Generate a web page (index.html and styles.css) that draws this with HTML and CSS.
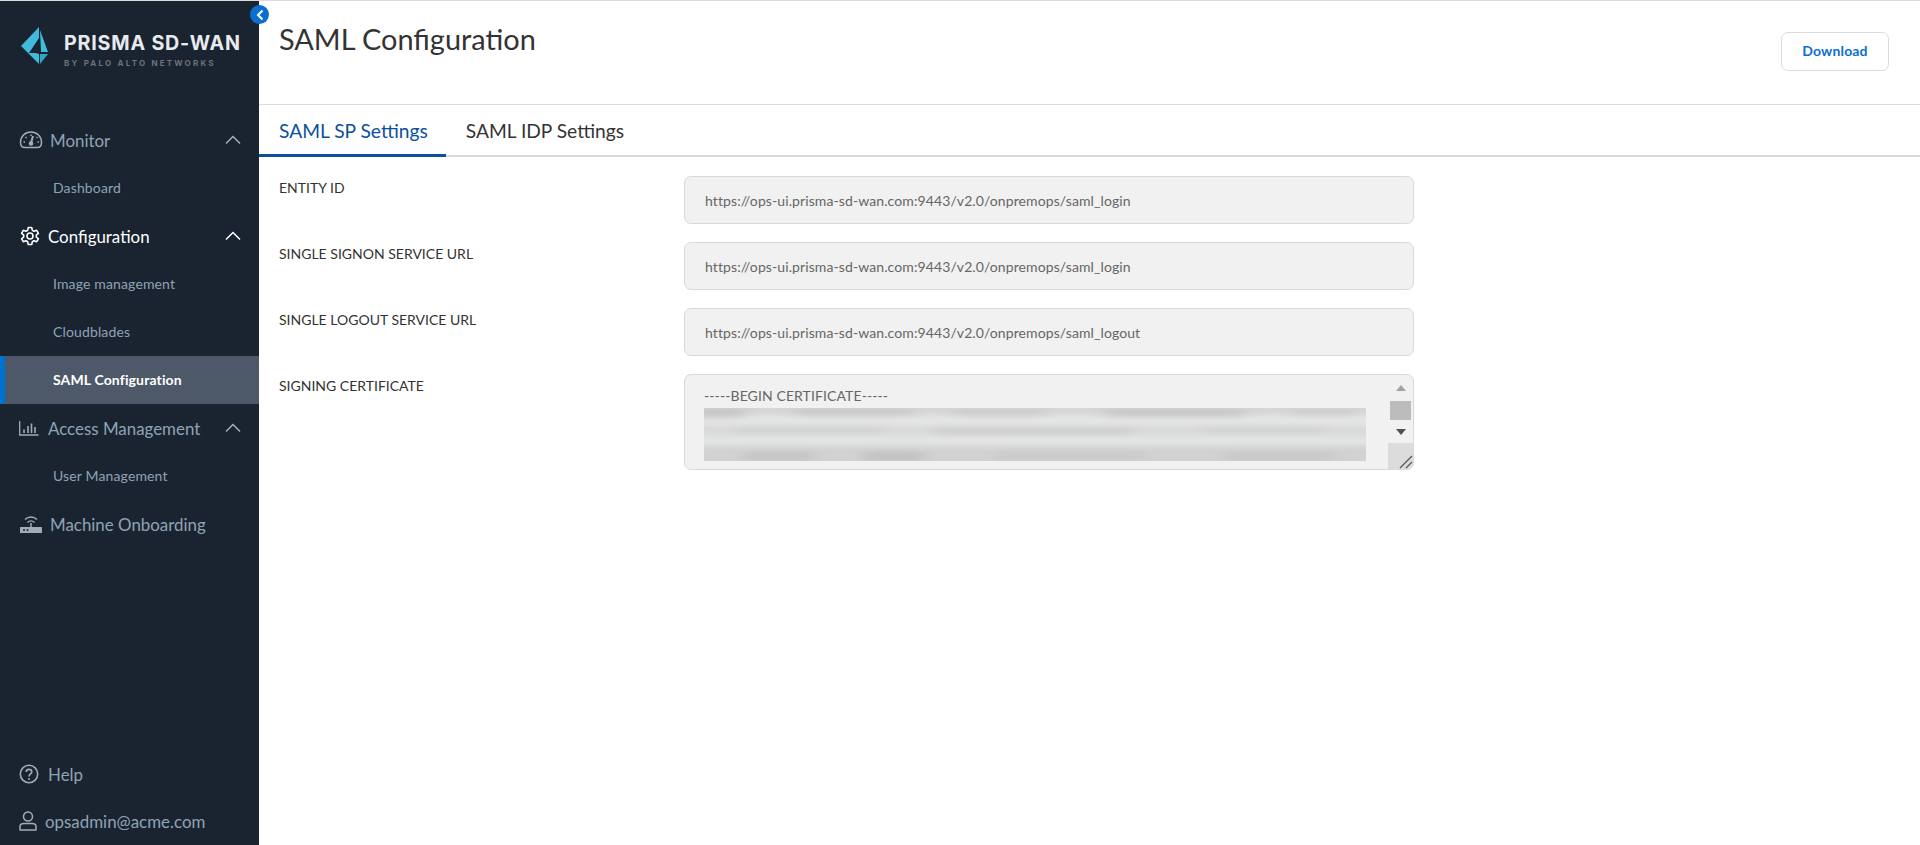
FILE: index.html
```html
<!DOCTYPE html>
<html lang="en">
<head>
<meta charset="utf-8">
<title>SAML Configuration</title>
<link rel="stylesheet" href="styles.css">
</head>
<body>
<div class="app">
  <aside class="sidebar">
    <button class="collapse" aria-label="Collapse">
      <svg viewBox="0 0 12 12" width="12" height="12"><path d="M8.500 1.500 4 6 8.500 10.500" fill="none" stroke="#fff" stroke-width="2"/></svg>
    </button>
    <div class="brand">
      <svg class="brand-mark" viewBox="0 0 27 38" width="27" height="38">
        <path d="M18 0V11L8 26H14.500L18 27V37L0 19Z" fill="#3fbcdc"/>
        <path d="M19 3 27 25H20Z" fill="#3fbcdc"/>
        <path d="M19 27H27L19 37Z" fill="#2fa6c6"/>
        <path d="M17 15V24H11Z" fill="#1a2330"/>
      </svg>
      <div class="brand-text">
        <div class="brand-name">PRISMA SD-WAN</div>
        <div class="brand-sub">BY PALO ALTO NETWORKS</div>
      </div>
    </div>
    <nav class="nav">
      <div class="nav-head">
        <svg class="ico" viewBox="0 0 24 20" width="24" height="20" fill="none" stroke="currentColor" stroke-width="1.500"><path d="M6 17.500H18.500C21 17.500 22.500 15.500 22.500 12.500 22.500 6.500 18 2 12 2S1.500 6.500 1.500 12.500C1.500 15.500 3 17.500 6 17.500Z"/><path d="M12 13 14 6" stroke-width="2"/><path d="M12 4.500V6M6.500 7 7.500 8M4.500 12H6M17.500 8 18.500 7M18.500 12H20"/><circle cx="12" cy="13.500" r="1.500" fill="currentColor"/></svg>
        <span class="head-label">Monitor</span>
        <svg class="chev" viewBox="0 0 16 10" width="16" height="10"><path d="M1 8.500 8 1.500 15 8.500" fill="none" stroke="currentColor" stroke-width="1.500"/></svg>
      </div>
      <a class="nav-item">Dashboard</a>
      <div class="nav-head active-head">
        <svg class="ico gear" viewBox="0 0 20 20" width="20" height="20" fill="none" stroke="currentColor" stroke-width="1.600"><path d="M8.300 1.500H11.700L12.300 4.200 14 5.200 16.700 4.300 18.400 7.300 16.300 9.100V11L18.400 12.800 16.700 15.700 14 14.800 12.300 15.800 11.700 18.500H8.300L7.700 15.800 6 14.800 3.300 15.700 1.600 12.800 3.700 11V9.100L1.600 7.300 3.300 4.300 6 5.200 7.700 4.200Z" stroke-linejoin="round"/><circle cx="10" cy="10" r="3"/></svg>
        <span class="head-label">Configuration</span>
        <svg class="chev" viewBox="0 0 16 10" width="16" height="10"><path d="M1 8.500 8 1.500 15 8.500" fill="none" stroke="currentColor" stroke-width="1.500"/></svg>
      </div>
      <a class="nav-item">Image management</a>
      <a class="nav-item">Cloudblades</a>
      <a class="nav-item current">SAML Configuration</a>
      <div class="nav-head">
        <svg class="ico bars" viewBox="0 0 20 16" width="20" height="16" fill="none" stroke="currentColor" stroke-width="1.300"><path d="M.700 1V15H19.500"/><path d="M5 9.500V13M9 6V13M12.500 3.500V13M16 7V13" stroke-width="1.600"/></svg>
        <span class="head-label">Access Management</span>
        <svg class="chev" viewBox="0 0 16 10" width="16" height="10"><path d="M1 8.500 8 1.500 15 8.500" fill="none" stroke="currentColor" stroke-width="1.500"/></svg>
      </div>
      <a class="nav-item">User Management</a>
      <div class="nav-head">
        <svg class="ico" viewBox="0 0 24 20" width="24" height="20" fill="none" stroke="currentColor" stroke-width="1.500"><path d="M6 5.500C9.500 2 14.500 2 18 5.500M8.500 8.500C10.500 6.500 13.500 6.500 15.500 8.500"/><path d="M12 9V13"/><path d="M1.500 13H22.500Q23 13 23 14V19H1V14Q1 13 1.500 13Z" fill="currentColor" stroke="none"/><circle cx="5" cy="16" r="1" fill="#1a2330" stroke="none"/><circle cx="8.500" cy="16" r="1" fill="#1a2330" stroke="none"/></svg>
        <span class="head-label">Machine Onboarding</span>
      </div>
    </nav>
    <div class="side-foot">
      <div class="foot-row help">
        <svg viewBox="0 0 20 20" width="20" height="20" fill="none" stroke="currentColor" stroke-width="1.600"><circle cx="10" cy="10" r="8.700"/><path d="M7.200 8C7.200 4.500 12.800 4.500 12.800 8 12.800 10 10 10 10 12.500"/><circle cx="10" cy="15" r="1" fill="currentColor" stroke="none"/></svg>
        <span>Help</span>
      </div>
      <div class="foot-row user">
        <svg viewBox="0 0 18 20" width="18" height="20" fill="none" stroke="currentColor" stroke-width="1.500"><circle cx="9" cy="5.500" r="4.500"/><path d="M1 19V15.500C1 13.500 3 12.500 5 12.500H13C15 12.500 17 13.500 17 15.500V19Z" stroke-linejoin="round"/></svg>
        <span>opsadmin@acme.com</span>
      </div>
    </div>
  </aside>
  <main class="main">
    <header class="page-head">
      <h1 class="title">SAML Configuration</h1>
      <button class="download">Download</button>
    </header>
    <div class="tabs">
      <div class="tab selected">SAML SP Settings</div>
      <div class="tab">SAML IDP Settings</div>
    </div>
    <section class="form">
      <div class="row">
        <div class="label">ENTITY ID</div>
        <div class="field">https://ops-ui.prisma-sd-wan.com:9443/v2.0/onpremops/saml_login</div>
      </div>
      <div class="row">
        <div class="label">SINGLE SIGNON SERVICE URL</div>
        <div class="field">https://ops-ui.prisma-sd-wan.com:9443/v2.0/onpremops/saml_login</div>
      </div>
      <div class="row">
        <div class="label">SINGLE LOGOUT SERVICE URL</div>
        <div class="field">https://ops-ui.prisma-sd-wan.com:9443/v2.0/onpremops/saml_logout</div>
      </div>
      <div class="row">
        <div class="label">SIGNING CERTIFICATE</div>
        <div class="field cert">
          <div class="cert-body">
            <div class="cert-line">-----BEGIN CERTIFICATE-----</div>
            <svg class="redact" viewBox="0 0 662 53" width="662" height="53" preserveAspectRatio="none">
              <defs><filter id="smear" x="-5%" y="-20%" width="110%" height="140%"><feGaussianBlur stdDeviation="8 3"/></filter></defs>
              <rect width="662" height="53" fill="#dfe0e0"/>
              <g filter="url(#smear)">
                <rect x="-10" y="-4" width="690" height="10" fill="#d4d4d4"/>
                <rect x="-10" y="10" width="690" height="5" fill="#e8e9e9"/>
                <rect x="-10" y="18" width="690" height="9" fill="#d9d9d9"/>
                <rect x="-10" y="30" width="690" height="5" fill="#e6e7e7"/>
                <rect x="-10" y="38" width="690" height="20" fill="#d2d2d2"/>
                <rect x="-10" y="0" width="50" height="10" fill="#c6c6c6"/>
                <rect x="90" y="1" width="120" height="7" fill="#c7c7c7"/>
                <rect x="250" y="2" width="90" height="6" fill="#c8c8c8"/>
                <rect x="400" y="1" width="140" height="8" fill="#c6c6c6"/>
                <rect x="590" y="2" width="60" height="6" fill="#cbcbcb"/>
                <rect x="30" y="20" width="150" height="5" fill="#cdcdcd"/>
                <rect x="230" y="20" width="200" height="6" fill="#cacaca"/>
                <rect x="500" y="20" width="120" height="5" fill="#cecece"/>
                <rect x="40" y="44" width="70" height="9" fill="#c4c4c4"/>
                <rect x="160" y="44" width="60" height="9" fill="#c0c0c0"/>
                <rect x="290" y="44" width="150" height="9" fill="#cacaca"/>
                <rect x="520" y="44" width="110" height="9" fill="#c8c8c8"/>
              </g>
            </svg>
          </div>
          <div class="scrollbar">
            <span class="arrow up"></span>
            <span class="thumb"></span>
            <span class="arrow down"></span>
            <span class="resizer">
              <svg viewBox="0 0 14 14" width="14" height="14" fill="none" stroke="#555" stroke-width="1.200"><path d="M1 13 13 1M7 13 13 7"/></svg>
            </span>
          </div>
        </div>
      </div>
    </section>
  </main>
</div>
</body>
</html>
```

FILE: styles.css
```css
* { box-sizing: border-box; }
html, body { margin: 0; height: 100%; }
body {
  font-family: Lato, "Open Sans", sans-serif;
  background: #fff;
  overflow: hidden;
}
.app {
  display: flex;
  height: 845px;
  border-top: 1px solid #dcdcdc;
}
.sidebar {
  position: relative;
  flex: 0 0 259px;
  display: flex;
  flex-direction: column;
  background: #1a2330;
  color: #8fa3b5;
}
.collapse {
  position: absolute;
  top: 4px;
  left: 250px;
  width: 19px;
  height: 19px;
  padding: 0;
  border: 0;
  border-radius: 50%;
  background: #0a6fd0;
  display: flex;
  align-items: center;
  justify-content: center;
}
.brand {
  display: flex;
  align-items: flex-start;
  height: 92px;
  padding: 26px 0 0 21px;
}
.brand-mark { flex: none; margin-right: 16px; }
.brand-text { display: flex; flex-direction: column; padding-top: 4px; }
.brand-name {
  font-family: Inter, sans-serif;
  font-weight: 700;
  font-size: 19.700px;
  line-height: 24px;
  letter-spacing: .8px;
  color: #e8ebee;
  white-space: nowrap;
}
.brand-sub {
  font-family: Inter, sans-serif;
  font-weight: 700;
  font-size: 8px;
  line-height: 16px;
  letter-spacing: 2.200px;
  color: #6d7278;
  white-space: nowrap;
}
.nav { display: flex; flex-direction: column; padding-top: 23px; }
.nav-head {
  display: flex;
  align-items: center;
  height: 48px;
  padding: 0 18px 0 19px;
  font-size: 16.900px;
  color: #8fa3b5;
}
.ico { flex: none; margin-right: 7px; color: #a2acb6; }
.gear { margin-right: 8px; margin-left: 1px; color: #fff; }
.bars { margin-right: 9px; }
.head-label { flex: 1; white-space: nowrap; }
.chev { flex: none; color: #a7afb7; }
.active-head { color: #fff; }
.active-head .chev { color: #fff; }
.nav-item {
  display: flex;
  align-items: center;
  height: 48px;
  padding-left: 53px;
  padding-bottom: 2px;
  font-size: 14px;
  letter-spacing: .14px;
  color: #8fa3b5;
}
.nav-item.current {
  background: #4d5968;
  border-left: 5px solid #0071ce;
  padding-left: 48px;
  color: #fff;
  font-weight: 700;
}
.side-foot {
  margin-top: auto;
  display: flex;
  flex-direction: column;
}
.foot-row {
  display: flex;
  align-items: center;
  height: 48px;
  padding-left: 19px;
  font-size: 16.900px;
  color: #8fa3b5;
}
.foot-row svg { flex: none; color: #a2acb6; }
.help { gap: 9px; padding-top: 2px; }
.user { gap: 8px; }
.main { flex: 1; display: flex; flex-direction: column; min-width: 0; }
.page-head {
  display: flex;
  justify-content: space-between;
  align-items: flex-start;
  height: 104px;
  padding: 0 31px 0 20px;
  border-bottom: 1px solid #dcdcdc;
}
.title {
  margin: 17px 0 0;
  font-size: 28.900px;
  font-weight: 400;
  line-height: 42px;
  color: #333;
}
.download {
  margin-top: 31px;
  width: 108px;
  height: 39px;
  padding: 0 0 2px;
  background: #fff;
  border: 1px solid #dcdcdc;
  border-radius: 7px;
  font-family: Lato, sans-serif;
  font-size: 14px;
  font-weight: 700;
  letter-spacing: .15px;
  color: #0a6fd0;
}
.tabs {
  display: flex;
  height: 52px;
  border-bottom: 2px solid #d9d9d9;
}
.tab {
  height: 52px;
  padding: 0 16px 0 20px;
  font-size: 19.200px;
  line-height: 52px;
  color: #333;
  white-space: nowrap;
}
.tab.selected {
  padding: 0 18px 0 20px;
  color: #0b4f9e;
  border-bottom: 3px solid #0b4f9e;
}
.form {
  display: flex;
  flex-direction: column;
  gap: 18px;
  padding-top: 19px;
}
.row { display: flex; align-items: flex-start; padding-left: 20px; }
.label {
  flex: 0 0 405px;
  font-size: 14px;
  line-height: 24px;
  color: #333;
}
.field {
  width: 730px;
  min-height: 48px;
  display: flex;
  align-items: center;
  padding-left: 20px;
  background: #f1f1f1;
  border: 1px solid #d9d9d9;
  border-radius: 7px;
  font-size: 14px;
  letter-spacing: .1px;
  color: #666;
}
.cert {
  height: 96px;
  align-items: stretch;
  padding: 0 0 0 19px;
  overflow: hidden;
}
.cert-body { flex: 1; min-width: 0; padding-top: 9px; }
.cert-line { line-height: 24px; white-space: nowrap; }
.redact { display: block; }
.scrollbar {
  flex: 0 0 25px;
  display: flex;
  flex-direction: column;
  align-items: center;
  padding-top: 10px;
}
.arrow { width: 0; height: 0; border-left: 5.500px solid transparent; border-right: 5.500px solid transparent; }
.up { border-bottom: 6px solid #a3a3a3; }
.thumb { width: 21px; height: 19px; margin: 10px 0 9px; background: #bcbcbc; }
.down { border-top: 6px solid #505050; }
.resizer {
  margin-top: auto;
  align-self: stretch;
  height: 26px;
  background: #dcdcdc;
  display: flex;
  align-items: flex-end;
  justify-content: flex-end;
}
```
